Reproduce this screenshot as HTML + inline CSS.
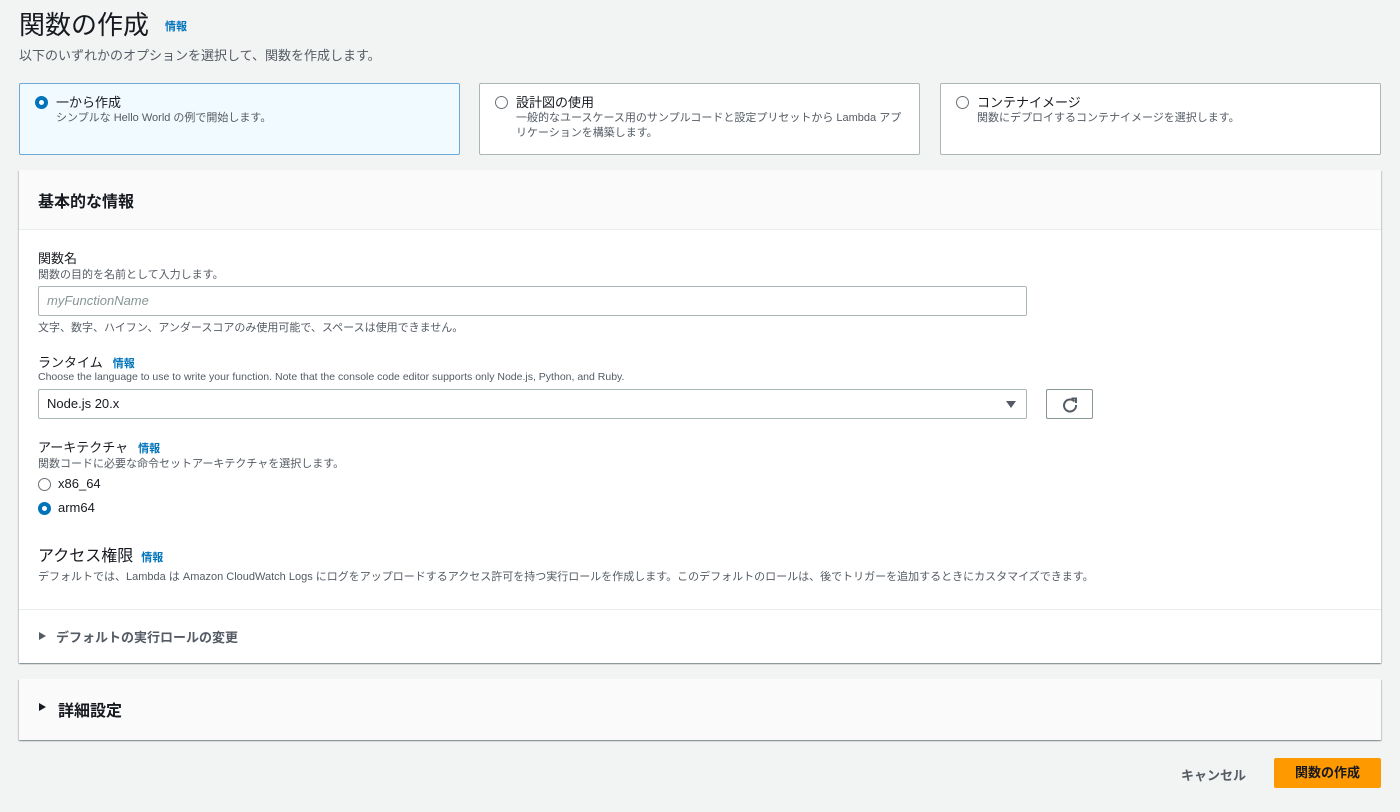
<!DOCTYPE html>
<html><head><meta charset="utf-8"><style>
*{box-sizing:border-box;margin:0;padding:0}
body{width:1400px;height:812px;background:#f2f3f3;font-family:"Liberation Sans","Noto Sans CJK JP",sans-serif;color:#16191f;position:relative;overflow:hidden}
.a{position:absolute}
.info{color:#0073bb;font-size:11px;font-weight:bold;margin-left:8px}
.small{font-size:11px;color:#545b64}
.card{position:absolute;top:83px;height:72px;background:#fff;border:1px solid #aab7b8;border-radius:2px}
.card.sel{background:#f1faff;border-color:#6aa9d8}
.radio{position:absolute;width:13px;height:13px;border-radius:50%;border:1px solid #687078;background:#fff}
.radio.on{border:4px solid #0073bb}
.ct{position:absolute;left:36px;top:8px;font-size:13px}
.cs{position:absolute;left:36px;top:27px;font-size:11px;color:#545b64;line-height:15px}
.panel{position:absolute;left:19px;width:1362px;background:#fff;box-shadow:0 1px 1px rgba(0,28,36,.3),1px 1px 1px rgba(0,28,36,.15),-1px 1px 1px rgba(0,28,36,.15)}
.lbl{font-size:13px}
.tri{display:inline-block;width:0;height:0;border-top:4px solid transparent;border-bottom:4px solid transparent;border-left:7px solid #16191f}
</style></head><body>
<div class="a" style="left:19px;top:5px;font-size:26px;color:#16191f">関数の作成<span class="info" style="margin-left:16px;font-size:11px;vertical-align:4px">情報</span></div>
<div class="a" style="left:19px;top:45px;font-size:13px;color:#545b64">以下のいずれかのオプションを選択して、関数を作成します。</div>

<div class="card sel" style="left:19px;width:441px"><div class="radio on" style="left:15px;top:12px"></div><div class="ct">一から作成</div><div class="cs">シンプルな Hello World の例で開始します。</div></div>
<div class="card" style="left:479px;width:441px"><div class="radio" style="left:15px;top:12px"></div><div class="ct">設計図の使用</div><div class="cs">一般的なユースケース用のサンプルコードと設定プリセットから Lambda アプ<br>リケーションを構築します。</div></div>
<div class="card" style="left:940px;width:441px"><div class="radio" style="left:15px;top:12px"></div><div class="ct">コンテナイメージ</div><div class="cs">関数にデプロイするコンテナイメージを選択します。</div></div>

<div class="panel" style="top:170px;height:493px">
 <div class="a" style="left:0;top:0;width:1362px;height:60px;background:#fafafa;border-bottom:1px solid #eaeded"></div>
 <div class="a" style="left:19px;top:18px;font-size:16px;font-weight:bold">基本的な情報</div>
 <div class="a lbl" style="left:19px;top:78px">関数名</div>
 <div class="a small" style="left:19px;top:96px">関数の目的を名前として入力します。</div>
 <div class="a" style="left:19px;top:116px;width:989px;height:30px;border:1px solid #aab7b8;border-radius:2px;background:#fff"><span class="a" style="left:8px;top:6px;font-size:13px;font-style:italic;color:#879596">myFunctionName</span></div>
 <div class="a small" style="left:19px;top:149px">文字、数字、ハイフン、アンダースコアのみ使用可能で、スペースは使用できません。</div>
 <div class="a lbl" style="left:19px;top:182px">ランタイム<span class="info" style="margin-left:10px">情報</span></div>
 <div class="a small" style="left:19px;top:201px;font-size:10.5px">Choose the language to use to write your function. Note that the console code editor supports only Node.js, Python, and Ruby.</div>
 <div class="a" style="left:19px;top:219px;width:989px;height:30px;border:1px solid #aab7b8;border-radius:2px;background:#fff"><span class="a" style="left:8px;top:6px;font-size:13px">Node.js 20.x</span><span class="a" style="right:10px;top:11px;width:0;height:0;border-left:5px solid transparent;border-right:5px solid transparent;border-top:7px solid #545b64"></span></div>
 <div class="a" style="left:1027px;top:219px;width:47px;height:30px;border:1px solid #879596;border-radius:2px;background:#fff">
  <svg class="a" style="left:14px;top:6px" width="18" height="18" viewBox="0 0 18 18"><path d="M13.5 5.5A6 6 0 1 0 15 9" fill="none" stroke="#545b64" stroke-width="2"/><path d="M10.5 2.5h4.5v4.5" fill="none" stroke="#545b64" stroke-width="2"/></svg>
 </div>
 <div class="a lbl" style="left:19px;top:267px">アーキテクチャ<span class="info" style="margin-left:10px">情報</span></div>
 <div class="a small" style="left:19px;top:285px">関数コードに必要な命令セットアーキテクチャを選択します。</div>
 <div class="radio" style="left:19px;top:308px"></div><div class="a lbl" style="left:39px;top:306px">x86_64</div>
 <div class="radio on" style="left:19px;top:332px"></div><div class="a lbl" style="left:39px;top:330px">arm64</div>
 <div class="a" style="left:19px;top:372px;font-size:16px">アクセス権限<span class="info">情報</span></div>
 <div class="a small" style="left:19px;top:398px">デフォルトでは、Lambda は Amazon CloudWatch Logs にログをアップロードするアクセス許可を持つ実行ロールを作成します。このデフォルトのロールは、後でトリガーを追加するときにカスタマイズできます。</div>
 <div class="a" style="left:0;top:439px;width:1362px;border-top:1px solid #eaeded"></div>
 <div class="a" style="left:20px;top:462px;line-height:0"><span class="tri" style="border-left-color:#545b64"></span></div>
 <div class="a" style="left:37px;top:457px;font-size:13px;font-weight:bold;color:#545b64">デフォルトの実行ロールの変更</div>
</div>

<div class="panel" style="top:679px;height:61px;background:#fafafa">
 <div class="a" style="left:20px;top:24px;line-height:0"><span class="tri"></span></div>
 <div class="a" style="left:39px;top:18px;font-size:16px;font-weight:bold">詳細設定</div>
</div>

<div class="a" style="left:1181px;top:765px;font-size:13px;font-weight:bold;color:#545b64">キャンセル</div>
<div class="a" style="left:1274px;top:758px;width:107px;height:30px;background:#ff9900;border-radius:2px;font-size:13px;font-weight:bold;text-align:center;line-height:30px">関数の作成</div>
</body></html>
